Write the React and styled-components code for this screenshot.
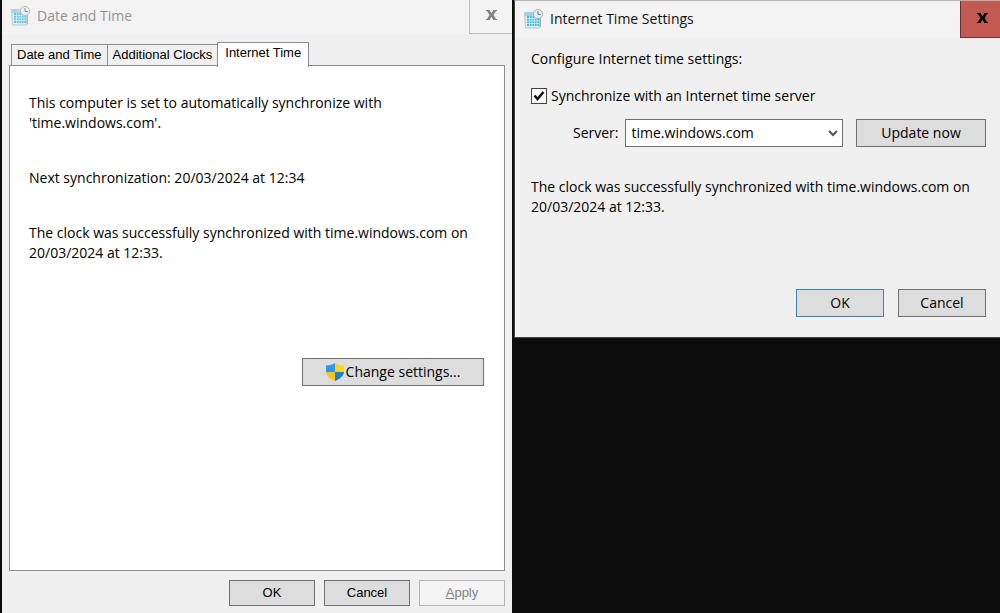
import { useState } from "react";
import styled, { createGlobalStyle } from "styled-components";

const TABS = ["Date and Time", "Additional Clocks", "Internet Time"];

const CalendarIcon = ({ faded }) => (
  <svg width="20" height="20" viewBox="0 0 20 20" opacity={faded ? 0.85 : 1} aria-hidden="true">
    <path d="M15 6l2 1v11l-2 1z" fill="#a3adb1" />
    <path d="M0.500 3.500h15v15.500h-14z" fill="#dcecf1" stroke="#b9c6cb" />
    <path d="M1 4h14v3H1z" fill="#8fd8ea" />
    <path d="M3 7h12v10H3z" fill="#3dbcdc" />
    <path d="M3 9.500h12M3 12h12M3 14.500h12M5.500 7v10M8 7v10M10.500 7v10M13 7v10" stroke="#d5f1f7" strokeWidth="0.800" />
    <circle cx="14" cy="5" r="4.600" fill="#e6edf1" stroke="#a9b1b6" />
    <path d="M14 2v3.500h3" fill="none" stroke="#6d8596" />
  </svg>
);

const ShieldIcon = () => (
  <svg width="18" height="18" viewBox="0 0 18 18" aria-hidden="true">
    <path d="M9 0C7 1.500 4 2.500 0 2.500V9h9z" fill="#2c9be3" />
    <path d="M9 0c2 1.500 5 2.500 9 2.500V9H9z" fill="#ffd21c" />
    <path d="M0 9h9v9C4 16 .5 13 0 9z" fill="#fbc316" />
    <path d="M18 9H9v9c5-2 8.500-5 9-9z" fill="#1283d6" />
  </svg>
);

const CloseIcon = () => (
  <svg width="11" height="10" viewBox="0 0 11 10" aria-hidden="true">
    <path d="M0 0h4v1l1.500 2L7 1V0h4v1h-1L7.500 5 10 9h1v1H7V9L5.500 7 4 9v1H0V9h1l2.500-4L1 1H0z" fill="currentColor" />
  </svg>
);

const App = () => {
  const [tab, setTab] = useState("Internet Time");
  const [sync, setSync] = useState(true);

  return (
    <>
      <GlobalStyle />
      <Desktop>
        <MainWindow>
          <TitleBar $inactive>
            <CalendarIcon faded />
            <h1>Date and Time</h1>
            <CloseButton $inactive aria-label="Close Date and Time">
              <CloseIcon />
            </CloseButton>
          </TitleBar>
          <TabList role="tablist">
            {TABS.map((name) => (
              <Tab
                key={name}
                role="tab"
                aria-selected={tab === name}
                $active={tab === name}
                onClick={() => setTab(name)}
              >
                {name}
              </Tab>
            ))}
          </TabList>
          <TabPanel role="tabpanel">
            <p>This computer is set to automatically synchronize with 'time.windows.com'.</p>
            <p>Next synchronization: 20/03/2024 at 12:34</p>
            <p>The clock was successfully synchronized with time.windows.com on 20/03/2024 at 12:33.</p>
            <ChangeButton>
              <ShieldIcon />
              Change settings...
            </ChangeButton>
          </TabPanel>
          <MainFooter>
            <SmallButton>OK</SmallButton>
            <SmallButton>Cancel</SmallButton>
            <SmallButton disabled>
              <u>A</u>pply
            </SmallButton>
          </MainFooter>
        </MainWindow>

        <SettingsWindow>
          <TitleBar>
            <CalendarIcon />
            <h1>Internet Time Settings</h1>
            <CloseButton aria-label="Close Internet Time Settings">
              <CloseIcon />
            </CloseButton>
          </TitleBar>
          <SettingsBody>
            <p>Configure Internet time settings:</p>
            <CheckRow>
              <CheckBox>
                <input type="checkbox" checked={sync} onChange={(e) => setSync(e.target.checked)} />
                {sync && (
                  <svg width="16" height="16" viewBox="0 0 16 16" aria-hidden="true">
                    <path d="M3.500 7.500l3 3.500 6-7" fill="none" stroke="#111" strokeWidth="2.500" />
                  </svg>
                )}
              </CheckBox>
              Synchronize with an Internet time server
            </CheckRow>
            <ServerRow>
              <label htmlFor="server">Server:</label>
              <SelectBox>
                <select id="server" disabled={!sync}>
                  <option>time.windows.com</option>
                </select>
                <svg width="10" height="7" viewBox="0 0 10 7" aria-hidden="true">
                  <path d="M1 1l4 4 4-4" fill="none" stroke="#555" strokeWidth="2" />
                </svg>
              </SelectBox>
              <UpdateButton>Update now</UpdateButton>
            </ServerRow>
            <p>The clock was successfully synchronized with time.windows.com on 20/03/2024 at 12:33.</p>
            <SettingsFooter>
              <DialogButton $primary>OK</DialogButton>
              <DialogButton>Cancel</DialogButton>
            </SettingsFooter>
          </SettingsBody>
        </SettingsWindow>
      </Desktop>
    </>
  );
};

const GlobalStyle = createGlobalStyle`
  * {
    box-sizing: border-box;
  }

  body {
    margin: 0;
    background-color: #0c0c0c;
    color: #000;
    font-family: "Open Sans", "Noto Sans", sans-serif;
    font-size: 14px;
    line-height: 20px;
  }

  p {
    margin: 0;
  }

  button, select {
    font: inherit;
    color: inherit;
  }
`;

const Desktop = styled.main`
  display: flex;
  align-items: flex-start;
  gap: 2px;
  min-height: 100vh;
  padding-left: 2px;
`;

const MainWindow = styled.section`
  flex: 510 1 0;
  display: flex;
  flex-direction: column;
  min-height: 100vh;
  background-color: #f0f0f0;
`;

const SettingsWindow = styled.section`
  flex: 485 1 0;
  background-color: #f0f0f0;
  border: 1px solid #444;
  border-top-color: #b4b4b4;
  border-right: none;
`;

const TitleBar = styled.header`
  display: flex;
  align-items: center;
  gap: 6px;
  height: ${({ $inactive }) => ($inactive ? "34px" : "37px")};
  padding-left: 9px;
  background-color: #f3f3f3;
  color: ${({ $inactive }) => ($inactive ? "#929292" : "#111")};

  svg {
    margin-bottom: 2px;
  }

  h1 {
    flex: 1;
    margin: 0;
    padding-bottom: 2px;
    font-size: 14px;
    font-weight: normal;
  }
`;

const CloseButton = styled.button`
  display: flex;
  align-items: center;
  justify-content: center;
  align-self: stretch;
  width: ${({ $inactive }) => ($inactive ? "43px" : "40px")};
  padding: ${({ $inactive }) => ($inactive ? "0 0 2px" : "0 0 0 4px")};
  background-color: ${({ $inactive }) => ($inactive ? "#f3f3f3" : "#c35a52")};
  color: ${({ $inactive }) => ($inactive ? "#838383" : "#000")};
  border: 1px solid ${({ $inactive }) => ($inactive ? "#bdbdbd" : "#6b3430")};
  border-width: 0 0 1px 1px;
`;

const TabList = styled.div`
  display: flex;
  align-items: flex-end;
  padding: 8px 9px 0;
`;

const Tab = styled.button`
  position: relative;
  z-index: ${({ $active }) => ($active ? 1 : 0)};
  height: ${({ $active }) => ($active ? "25px" : "21px")};
  margin: ${({ $active }) => ($active ? "0 0 -2px" : "0")};
  padding: ${({ $active }) => ($active ? "0 7px 4px" : "0 5px")};
  background-color: ${({ $active }) => ($active ? "#fff" : "#f0f0f0")};
  border: 1px solid #8b8b96;
  border-bottom: none;
  font-family: "Liberation Sans", sans-serif;
  font-size: 13px;

  & + & {
    margin-left: -1px;
  }
`;

const TabPanel = styled.div`
  flex: 1;
  display: flex;
  flex-direction: column;
  gap: 35px;
  margin: 0 7px;
  padding: 27px 20px 27px 19px;
  background-color: #fff;
  border: 1px solid #8b8b96;
`;

const MainFooter = styled.footer`
  display: flex;
  justify-content: flex-end;
  gap: 9px;
  padding: 9px 7px 7px;
`;

const Button = styled.button`
  height: 28px;
  padding: 0;
  background-color: #ddd;
  border: 1px solid ${({ $primary }) => ($primary ? "#3c7fb1" : "#707070")};

  &:disabled {
    background-color: #f4f4f4;
    border-color: #b5b5b5;
    color: #838383;
  }
`;

const SmallButton = styled(Button)`
  width: 86px;
  height: 26px;
  font-family: "Liberation Sans", sans-serif;
  font-size: 13px;
`;

const DialogButton = styled(Button)`
  width: 88px;
`;

const UpdateButton = styled(Button)`
  width: 130px;
  margin-left: 7px;
`;

const ChangeButton = styled(Button)`
  display: flex;
  align-items: center;
  justify-content: center;
  align-self: flex-end;
  gap: 2px;
  width: 182px;
  margin-top: 60px;
`;

const SettingsBody = styled.div`
  padding: 11px 14px 20px 16px;
`;

const CheckRow = styled.label`
  display: flex;
  align-items: center;
  gap: 4px;
  margin-top: 17px;
`;

const CheckBox = styled.span`
  position: relative;
  display: flex;

  input {
    appearance: none;
    width: 16px;
    height: 16px;
    margin: 0;
    background-color: #fff;
    border: 1px solid #444;
  }

  svg {
    position: absolute;
    inset: 0;
    pointer-events: none;
  }
`;

const ServerRow = styled.div`
  display: flex;
  align-items: center;
  gap: 6px;
  margin: 13px 0 30px;
  padding-left: 42px;
`;

const SelectBox = styled.div`
  position: relative;
  flex: 1;

  select {
    display: block;
    appearance: none;
    width: 100%;
    height: 28px;
    padding: 0 24px 0 6px;
    background-color: #fff;
    border: 1px solid #707070;
    border-radius: 0;
  }

  svg {
    position: absolute;
    top: 11px;
    right: 5px;
    pointer-events: none;
  }
`;

const SettingsFooter = styled.footer`
  display: flex;
  justify-content: flex-end;
  gap: 14px;
  margin-top: 72px;
`;

export default App;
